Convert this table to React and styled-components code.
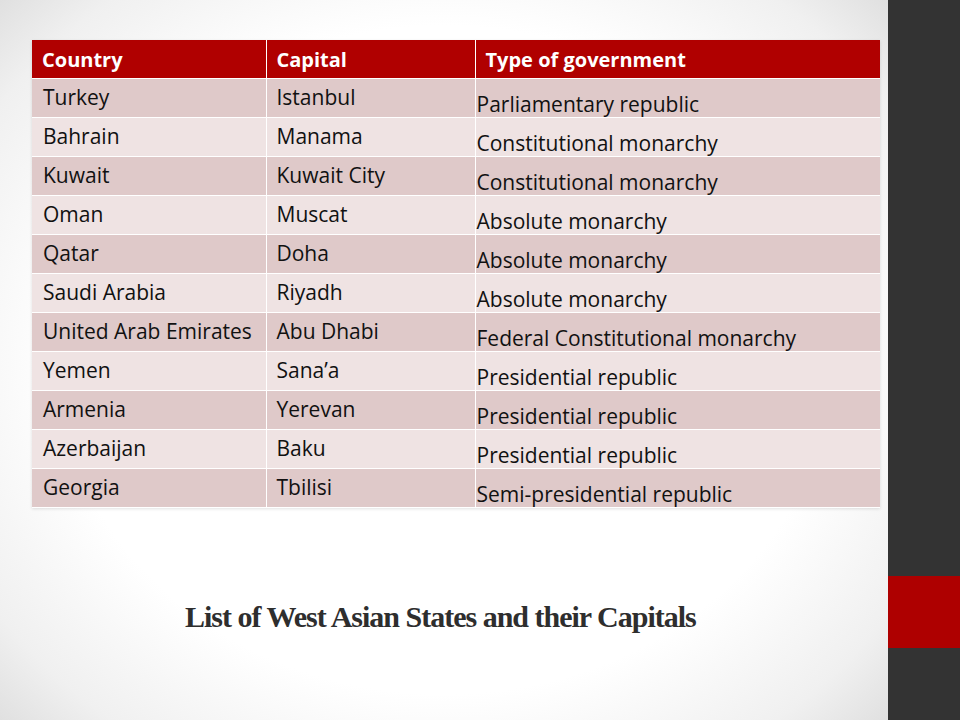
import React from 'react'
import styled, { createGlobalStyle } from 'styled-components'

const GlobalStyle = createGlobalStyle`
  html, body {
    margin: 0;
    padding: 0;
    width: 960px;
    height: 720px;
    overflow: hidden;
  }
`;

const rows = [
  ['Turkey', 'Istanbul', 'Parliamentary republic'],
  ['Bahrain', 'Manama', 'Constitutional monarchy'],
  ['Kuwait', 'Kuwait City', 'Constitutional monarchy'],
  ['Oman', 'Muscat', 'Absolute monarchy'],
  ['Qatar', 'Doha', 'Absolute monarchy'],
  ['Saudi Arabia', 'Riyadh', 'Absolute monarchy'],
  ['United Arab Emirates', 'Abu Dhabi', 'Federal Constitutional monarchy'],
  ['Yemen', 'Sana’a', 'Presidential republic'],
  ['Armenia', 'Yerevan', 'Presidential republic'],
  ['Azerbaijan', 'Baku', 'Presidential republic'],
  ['Georgia', 'Tbilisi', 'Semi-presidential republic'],
];

export default function App() {
  return (
    <>
      <GlobalStyle />
      <Screen>
        <Slide>
          <Table>
            <colgroup>
              <col style={{ width: 234 }} />
              <col style={{ width: 209 }} />
              <col />
            </colgroup>
            <thead>
              <tr>
                <Head>Country</Head>
                <Head>Capital</Head>
                <Head>Type of government</Head>
              </tr>
            </thead>
            <tbody>
              {rows.map((r, i) => (
                <Row key={r[0]} dark={i % 2 === 0}>
                  <Cell>{r[0]}</Cell>
                  <Cell>{r[1]}</Cell>
                  <GovCell>{r[2]}</GovCell>
                </Row>
              ))}
            </tbody>
          </Table>
          <Title>List of West Asian States and their Capitals</Title>
        </Slide>
        <SideBar>
          <RedBlock />
        </SideBar>
      </Screen>
    </>
  )
}

const Screen = styled.div`
  width: 960px;
  height: 720px;
  display: flex;
`;

const Slide = styled.div`
  width: 888px;
  height: 720px;
  box-sizing: border-box;
  padding: 40px 8px 0 32px;
  background: radial-gradient(ellipse 75% 80% at 50% 50%, #ffffff 58%, #f0f0f0 80%, #d4d4d4 100%);
  display: flex;
  flex-direction: column;
`;

const Table = styled.table`
  width: 848px;
  border-collapse: collapse;
  table-layout: fixed;
  font-family: "Open Sans", Lato, sans-serif;
  font-size: 21px;
  line-height: 24px;
  color: #111;
  box-shadow: 0 1px 3px rgba(0, 0, 0, 0.12);
`;

const Head = styled.th`
  height: 38px;
  padding: 3px 10px 0;
  box-sizing: border-box;
  background: #b00000;
  color: #ffffff;
  font-size: 20px;
  font-weight: bold;
  text-align: left;
  border-left: 1px solid #ffffff;
  border-bottom: 1px solid #ffffff;
  &:first-child {
    border-left: none;
  }
`;

const Row = styled.tr`
  background: ${p => (p.dark ? '#dfc9c9' : '#efe3e3')};
`;

const Cell = styled.td`
  height: 39px;
  padding: 6px 10px 0;
  box-sizing: border-box;
  vertical-align: top;
  border-left: 1px solid #ffffff;
  border-bottom: 1px solid #ffffff;
  white-space: nowrap;
  &:first-child {
    border-left: none;
    padding-left: 11px;
  }
`;

const GovCell = styled(Cell)`
  padding: 13px 0 0 1px;
`;

const Title = styled.h1`
  margin: 92px 0 0 153px;
  font-family: "Liberation Serif", serif;
  font-weight: bold;
  font-size: 30px;
  letter-spacing: -1px;
  color: #2e2e2e;
`;

const SideBar = styled.div`
  width: 72px;
  height: 720px;
  background: #333333;
  padding-top: 576px;
  box-sizing: border-box;
`;

const RedBlock = styled.div`
  height: 72px;
  background: #ae0000;
`;
